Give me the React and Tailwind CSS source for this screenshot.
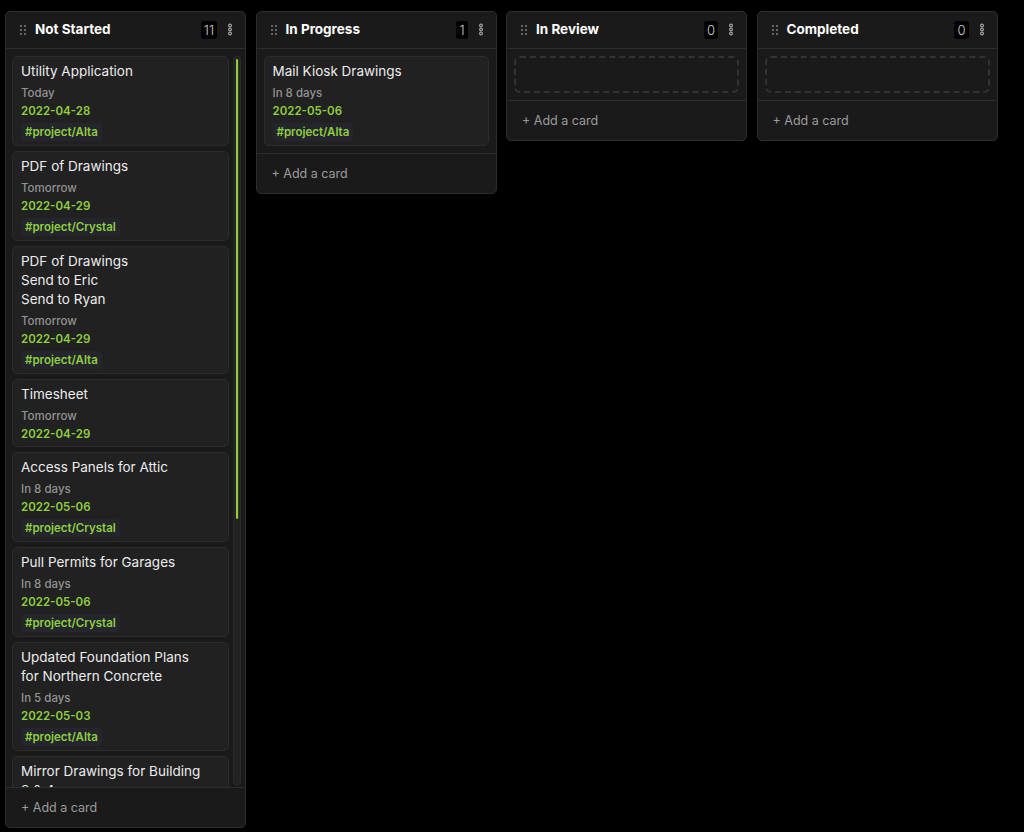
import React from "react";

const GREEN = "text-[#8fcf3f]";

const notStarted = [
  { title: ["Utility Application"], when: "Today", date: "2022-04-28", tag: "#project/Alta" },
  { title: ["PDF of Drawings"], when: "Tomorrow", date: "2022-04-29", tag: "#project/Crystal" },
  { title: ["PDF of Drawings", "Send to Eric", "Send to Ryan"], when: "Tomorrow", date: "2022-04-29", tag: "#project/Alta" },
  { title: ["Timesheet"], when: "Tomorrow", date: "2022-04-29" },
  { title: ["Access Panels for Attic"], when: "In 8 days", date: "2022-05-06", tag: "#project/Crystal" },
  { title: ["Pull Permits for Garages"], when: "In 8 days", date: "2022-05-06", tag: "#project/Crystal" },
  { title: ["Updated Foundation Plans", "for Northern Concrete"], when: "In 5 days", date: "2022-05-03", tag: "#project/Alta" },
  { title: ["Mirror Drawings for Building", "3 & 4"], when: "In 8 days", date: "2022-05-06", tag: "#project/Alta" },
];

const inProgress = [
  { title: ["Mail Kiosk Drawings"], when: "In 8 days", date: "2022-05-06", tag: "#project/Alta" },
];

function Grip() {
  return (
    <svg width="8" height="12" viewBox="0 0 8 12" className="shrink-0">
      {[2, 6, 10].map((y) =>
        [2, 6].map((x) => <circle key={`${x}-${y}`} cx={x} cy={y} r="0.9" fill="#8a8a8a" />)
      )}
    </svg>
  );
}

function Dots() {
  return (
    <svg width="6" height="13" viewBox="0 0 6 13" className="shrink-0">
      {[2.5, 6.5, 10.5].map((y) => (
        <circle key={y} cx="3" cy={y} r="1.4" fill="none" stroke="#a0a0a0" strokeWidth="1.2" />
      ))}
    </svg>
  );
}

function Header({ title, count }) {
  return (
    <div className="h-[37px] shrink-0 flex items-center pl-[13px] pr-[12px] pb-[1px] border-b border-[#2d2d2d]">
      <Grip />
      <span className="ml-[8px] text-[13.5px] font-bold text-white">{title}</span>
      <div className="ml-auto flex items-center gap-[10px]">
        <span className="h-[18px] px-[3px] rounded-[3px] bg-black text-[#cfcfcf] text-[13px] font-light leading-[18px] text-center">
          {count}
        </span>
        <Dots />
      </div>
    </div>
  );
}

function Card({ c }) {
  return (
    <div className="shrink-0 rounded-[5px] border border-[#2c2c2c] bg-[#212121] px-[8px] pt-[5px] pb-[4px]">
      <div className="text-[13.5px] leading-[19px] text-[#ececec]">
        {c.title.map((t, i) => (
          <div key={i}>{t}</div>
        ))}
      </div>
      <div className="mt-[4px] text-[11.5px] leading-[16px] font-medium text-[#939393]">{c.when}</div>
      <div className={`mt-[2px] text-[11.5px] leading-[16px] font-semibold ${GREEN}`}>{c.date}</div>
      {c.tag && (
        <div className="mt-[4px] flex">
          <span className={`h-[18px] px-[4px] rounded-[4px] bg-[#25252d] text-[11.5px] leading-[18px] font-semibold ${GREEN}`}>
            {c.tag}
          </span>
        </div>
      )}
    </div>
  );
}

function Footer() {
  return (
    <div className="h-[40px] shrink-0 flex items-center px-[15px] pt-[1px] border-t border-[#2d2d2d] text-[12.5px] text-[#9c9c9c]">
      + Add a card
    </div>
  );
}

function Column({ title, count, children, full }) {
  return (
    <div
      className={`w-[241px] shrink-0 flex flex-col rounded-[5px] border border-[#2d2d2d] bg-[#1a1a1a] overflow-hidden ${
        full ? "h-full" : ""
      }`}
    >
      <Header title={title} count={count} />
      {children}
      <Footer />
    </div>
  );
}

export default function App() {
  return (
    <div
      className="w-[1024px] h-[832px] bg-black pt-[11px] pb-[4px] pl-[5px] flex items-start gap-[9.5px] overflow-hidden"
      style={{ fontFamily: "Inter, 'Noto Sans', sans-serif" }}
    >
      <Column title="Not Started" count="11" full>
        <div className="flex-1 min-h-0 flex pl-[6px] pr-[4px] pt-[7px]">
          <div className="flex-1 min-w-0 flex flex-col gap-[5px] overflow-hidden">
            {notStarted.map((c, i) => (
              <Card key={i} c={c} />
            ))}
          </div>
          <div className="w-[8px] ml-[4px] mb-[2px] rounded-[3px] bg-[#222222] border border-[#2a2a2a] flex justify-center pt-[2px]">
            <div className="w-[3px] h-[460px] rounded-full bg-[#2f3a1e] flex justify-center">
              <div className="w-[2px] h-full bg-[#8fcf3f] rounded-full" />
            </div>
          </div>
        </div>
      </Column>

      <Column title="In Progress" count="1">
        <div className="px-[7px] pt-[7px] pb-[7px] flex flex-col gap-[5px]">
          {inProgress.map((c, i) => (
            <Card key={i} c={c} />
          ))}
        </div>
      </Column>

      <Column title="In Review" count="0">
        <div className="px-[7px] pt-[7px] pb-[7px]">
          <div className="h-[37px] rounded-[6px] border-2 border-dashed border-[#333333]" />
        </div>
      </Column>

      <Column title="Completed" count="0">
        <div className="px-[7px] pt-[7px] pb-[7px]">
          <div className="h-[37px] rounded-[6px] border-2 border-dashed border-[#333333]" />
        </div>
      </Column>
    </div>
  );
}
